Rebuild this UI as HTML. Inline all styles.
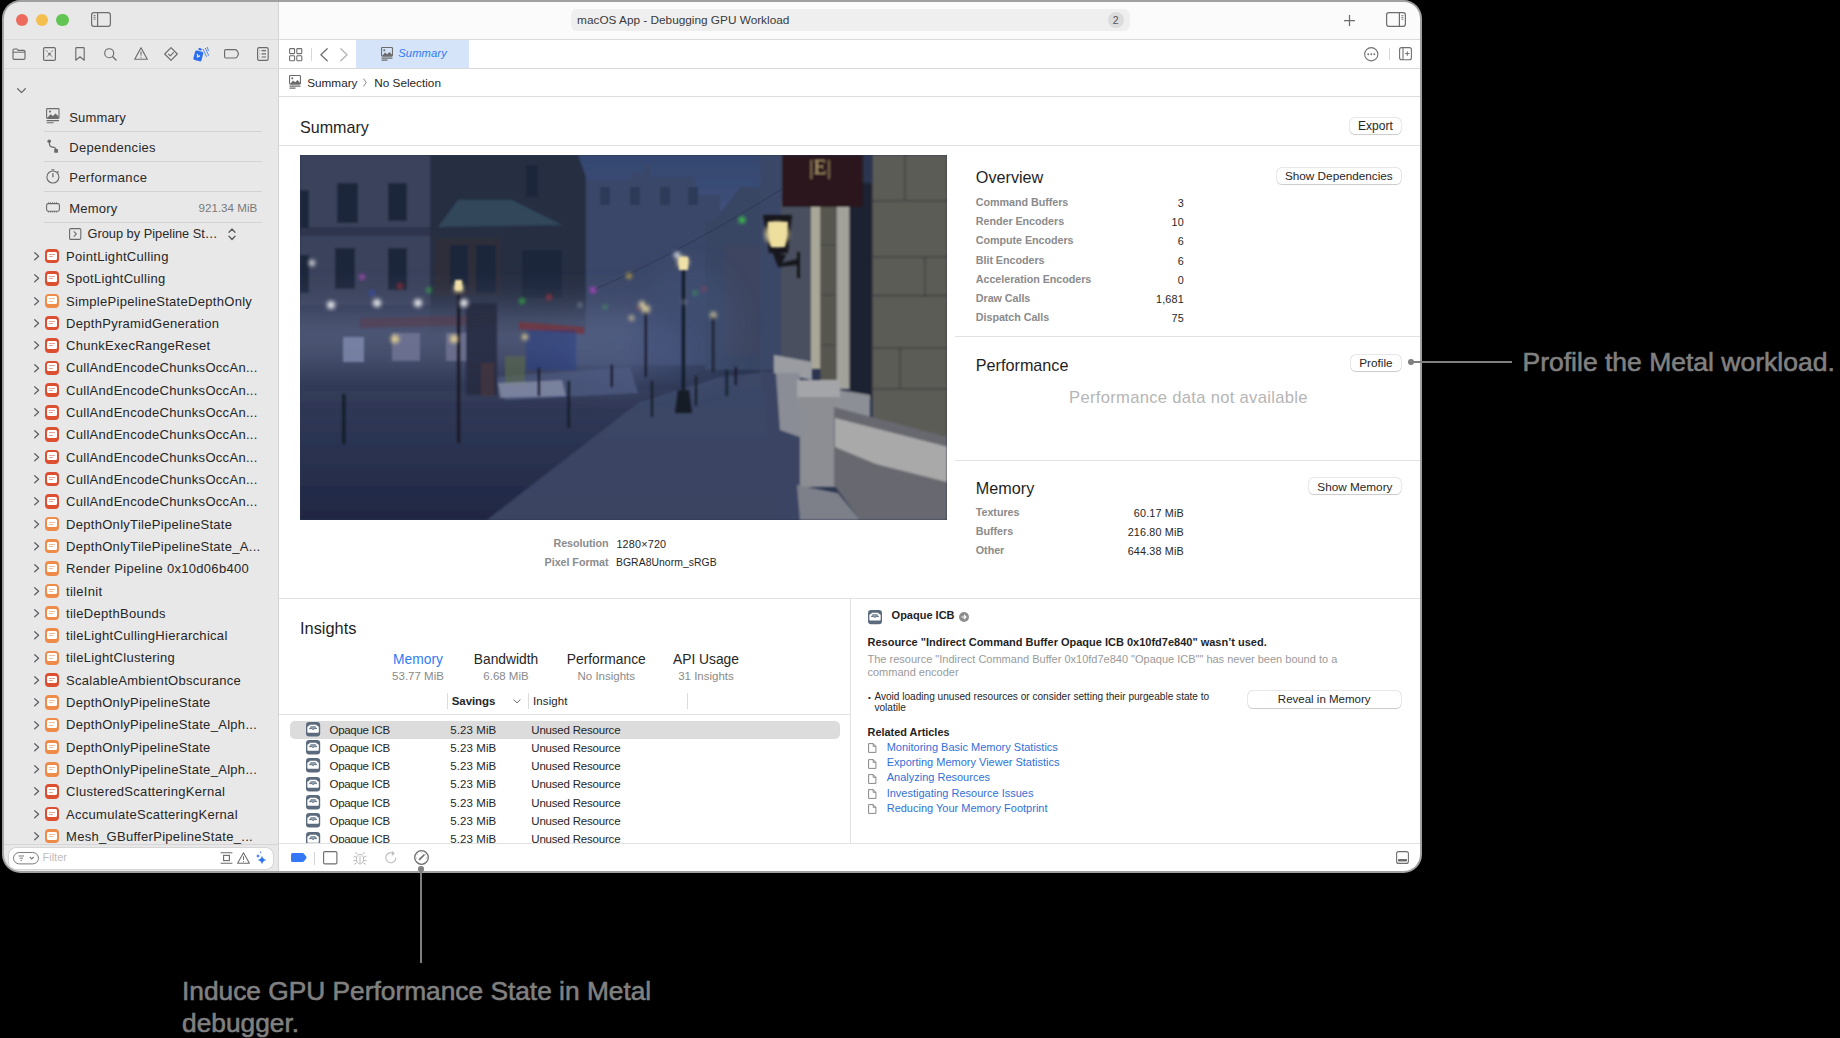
<!DOCTYPE html><html><head><meta charset="utf-8"><style>
*{box-sizing:border-box;margin:0;padding:0}
html,body{width:1840px;height:1038px;overflow:hidden;background:#000}
body{font-family:"Liberation Sans",sans-serif;color:#262626;position:relative}
.a{position:absolute;white-space:nowrap}
svg{position:absolute;overflow:visible}
#frame{position:absolute;left:1.7px;top:0;width:1420.5px;height:873.2px;border-radius:18.5px;background:#a0a0a0}
#content{position:absolute;left:0;top:0;width:1840px;height:1038px;clip-path:inset(2px 420px 167px 3.9px round 16.5px)}
.hl{position:absolute;height:1px;background:#dedede}
.vl{position:absolute;width:1px;background:#dedede}
.tt{position:absolute;font-size:13px;letter-spacing:.34px;color:#262626;white-space:nowrap;line-height:16px}
.ic{position:absolute;width:14.5px;height:14.5px;border-radius:4px}
.ic.red{background:#dc4f30}
.ic.org{background:#ee8b47}
.ic i{position:absolute;left:2.2px;top:2.7px;width:10.2px;height:8.2px;background:#fff;border-radius:1.5px}
.ic i b{position:absolute;height:1px}
.lbl{position:absolute;font-size:11px;font-weight:700;color:#8b8b8b;letter-spacing:-.15px;white-space:nowrap;line-height:13px}
.val{position:absolute;font-size:11px;color:#262626;white-space:nowrap;line-height:13px}
.btn{position:absolute;background:#fff;border-radius:4.5px;box-shadow:0 0 0 .5px rgba(0,0,0,.16),0 .7px 1px rgba(0,0,0,.14);font-size:11px;color:#262626;text-align:center;white-space:nowrap}
</style></head><body>
<div id="frame"></div><div id="content">
<div class="a" style="left:0;top:0;width:279px;height:873px;background:#e8e8e8"></div>
<div class="a" style="left:279px;top:0;width:1150px;height:39px;background:#fbfbfb"></div>
<div class="a" style="left:279px;top:39px;width:1150px;height:840px;background:#fff"></div>
<div class="vl" style="left:278.3px;top:0;height:873px;background:#d4d4d4"></div>
<div class="hl" style="left:0;top:38.6px;width:1430px;background:#dadada"></div>
<div class="hl" style="left:0;top:68px;width:1430px;background:#dadada"></div>
<div class="hl" style="left:279px;top:96px;width:1150px"></div>
<div class="a" style="left:15.9px;top:13.9px;width:12.2px;height:12.2px;border-radius:50%;background:#ed6a5e"></div>
<div class="a" style="left:35.9px;top:13.9px;width:12.2px;height:12.2px;border-radius:50%;background:#f5bf4f"></div>
<div class="a" style="left:56.4px;top:13.9px;width:12.2px;height:12.2px;border-radius:50%;background:#61c554"></div>
<svg style="left:91px;top:12px" width="20" height="15" viewBox="0 0 20 15"><rect x=".6" y=".6" width="18.8" height="13.8" rx="2.3" fill="none" stroke="#6e6e6e" stroke-width="1.2"/><line x1="6.6" y1=".6" x2="6.6" y2="14.4" stroke="#6e6e6e" stroke-width="1.2"/><line x1="2.6" y1="3.6" x2="4.6" y2="3.6" stroke="#6e6e6e" stroke-width=".9"/><line x1="2.6" y1="5.4" x2="4.6" y2="5.4" stroke="#6e6e6e" stroke-width=".9"/><line x1="2.6" y1="7.2" x2="4.6" y2="7.2" stroke="#6e6e6e" stroke-width=".9"/></svg>
<svg style="left:12px;top:48px" width="14" height="12" viewBox="0 0 14 12"><path d="M1,3 V10.2 Q1,11.4 2.2,11.4 H11.8 Q13,11.4 13,10.2 V3.6 Q13,2.4 11.8,2.4 H6.2 L5,1 H2.2 Q1,1 1,2.2 Z" fill="none" stroke="#6b6b6b" stroke-width="1.15" stroke-linejoin="round" stroke-linecap="round"/><line x1="1" y1="4.2" x2="13" y2="4.2" stroke="#6b6b6b" stroke-width="1"/></svg>
<svg style="left:43px;top:47px" width="13" height="14" viewBox="0 0 13 14"><rect x=".6" y=".6" width="11.8" height="12.8" rx="1.2" fill="none" stroke="#6b6b6b" stroke-width="1.15" stroke-linejoin="round" stroke-linecap="round"/><path d="M3.2,3.4 L9.8,10.6 M9.8,3.4 L3.2,10.6" stroke="#6b6b6b" stroke-width="1" stroke-dasharray="2 1.2"/><circle cx="6.5" cy="7" r="1.2" fill="#6b6b6b"/></svg>
<svg style="left:75px;top:47px" width="10" height="14" viewBox="0 0 10 14"><path d="M.8,13.2 V1.4 Q.8,.6 1.6,.6 H8.4 Q9.2,.6 9.2,1.4 V13.2 L5,9.8 Z" fill="none" stroke="#6b6b6b" stroke-width="1.15" stroke-linejoin="round" stroke-linecap="round"/></svg>
<svg style="left:104px;top:48px" width="13" height="13" viewBox="0 0 13 13"><circle cx="5.2" cy="5.2" r="4.5" fill="none" stroke="#6b6b6b" stroke-width="1.15" stroke-linejoin="round" stroke-linecap="round"/><line x1="8.5" y1="8.5" x2="12" y2="12" stroke="#6b6b6b" stroke-width="1.4" stroke-linecap="round"/></svg>
<svg style="left:134px;top:47px" width="14" height="13" viewBox="0 0 14 13"><path d="M7,.8 L13.3,12.2 H.7 Z" fill="none" stroke="#6b6b6b" stroke-width="1.15" stroke-linejoin="round" stroke-linecap="round"/><line x1="7" y1="4.5" x2="7" y2="8.6" stroke="#6b6b6b" stroke-width="1.1"/><circle cx="7" cy="10.3" r=".6" fill="#6b6b6b"/></svg>
<svg style="left:164px;top:47px" width="14" height="14" viewBox="0 0 14 14"><path d="M7,.7 L13.3,7 L7,13.3 L.7,7 Z" fill="none" stroke="#6b6b6b" stroke-width="1.15" stroke-linejoin="round" stroke-linecap="round"/><path d="M4.6,7.2 L6.3,8.8 L9.4,5.6" fill="none" stroke="#6b6b6b" stroke-width="1.15" stroke-linejoin="round" stroke-linecap="round"/></svg>
<svg style="left:194px;top:47px" width="16" height="14" viewBox="0 0 16 14"><g transform="rotate(15 4.3 8.9)"><rect x=".1" y="4" width="8.4" height="9.8" rx="1.6" fill="#2b6ff0"/><path d="M2.6,7.4 L4.6,9.6 M6,8.4 L3.2,10.6" stroke="#fff" stroke-width="1.1"/></g><rect x="4.4" y="1.2" width="3.4" height="2" rx=".8" fill="#2b6ff0" transform="rotate(15 6.1 2.2)"/><path d="M9.1,2.5 L12.4,9.3 M11.4,1.4 L14.5,8.2 M13.4,.6 L14.5,4.1" stroke="#2b6ff0" stroke-width="1" stroke-dasharray=".9 1.3" stroke-linecap="round" fill="none"/></svg>
<svg style="left:224px;top:49px" width="15" height="10" viewBox="0 0 15 10"><path d="M1.8,.6 H11 Q12.2,.6 13,1.6 L14.3,4.2 Q14.6,4.8 14.3,5.4 L13,8 Q12.2,9 11,9 H1.8 Q.6,9 .6,7.8 V1.8 Q.6,.6 1.8,.6 Z" fill="none" stroke="#6b6b6b" stroke-width="1.15" stroke-linejoin="round" stroke-linecap="round"/></svg>
<svg style="left:256.5px;top:47px" width="12" height="14" viewBox="0 0 12 14"><rect x=".6" y=".6" width="10.6" height="12.8" rx="1.6" fill="none" stroke="#6b6b6b" stroke-width="1.15" stroke-linejoin="round" stroke-linecap="round"/><path d="M4.6,3.6 H9 M4.6,6.8 H9 M4.6,10 H9" stroke="#6b6b6b" stroke-width="1.2"/><path d="M2.6,3.6 H3 M2.6,6.8 H3 M2.6,10 H3" stroke="#6b6b6b" stroke-width="1"/></svg>
<svg style="left:17px;top:88px" width="9" height="6" viewBox="0 0 9 6"><polyline points=".7,.7 4.5,4.6 8.3,.7" fill="none" stroke="#6a6a6a" stroke-width="1.3" stroke-linecap="round" stroke-linejoin="round"/></svg>
<div class="a" style="left:44px;top:131.0px;width:218px;height:1px;background:#d2d2d2"></div>
<div class="a" style="left:44px;top:161.0px;width:218px;height:1px;background:#d2d2d2"></div>
<div class="a" style="left:44px;top:190.8px;width:218px;height:1px;background:#d2d2d2"></div>
<div class="a" style="left:44px;top:221.9px;width:218px;height:1px;background:#d2d2d2"></div>
<div class="a" style="left:69.20px;top:111.10px;font-size:13px;line-height:13px;color:#2a2a2a;letter-spacing:0.17px;">Summary</div>
<div class="a" style="left:69.20px;top:141.00px;font-size:13px;line-height:13px;color:#2a2a2a;letter-spacing:0.3px;">Dependencies</div>
<div class="a" style="left:69.20px;top:171.20px;font-size:13px;line-height:13px;color:#2a2a2a;letter-spacing:0.34px;">Performance</div>
<div class="a" style="left:69.20px;top:201.60px;font-size:13px;line-height:13px;color:#2a2a2a;letter-spacing:0.24px;">Memory</div>
<div class="a" style="left:-342.80px;width:600px;text-align:right;top:202.48px;font-size:11.6px;line-height:11.6px;color:#7a7a7a;">921.34 MiB</div>
<svg style="left:46px;top:108px" width="14" height="16" viewBox="0 0 14 16"><rect x=".6" y=".6" width="12.4" height="9.8" rx=".8" fill="none" stroke="#6b6b6b" stroke-width="1.1"/><path d="M1.2,10 L4.5,6.2 L7,8 L9.5,5.5 L12.6,8.5 V10 Z" fill="#6b6b6b"/><circle cx="4" cy="3.6" r="1.1" fill="#6b6b6b"/><path d="M.6,12.6 H13 M.6,14.8 H7.6" stroke="#6b6b6b" stroke-width="1.1"/></svg>
<svg style="left:46.5px;top:139px" width="12" height="14" viewBox="0 0 12 14"><circle cx="2.2" cy="2.2" r="1.8" fill="#6b6b6b"/><path d="M2.2,3 L2.6,6 Q3,7.5 4.6,7.8 L7,8.3 Q8.8,8.8 9,10.4" fill="none" stroke="#6b6b6b" stroke-width="1.2"/><rect x="7.2" y="10" width="3.8" height="3.8" rx=".6" fill="#6b6b6b"/></svg>
<svg style="left:46px;top:168.5px" width="14" height="15" viewBox="0 0 14 15"><circle cx="6.9" cy="8" r="6" fill="none" stroke="#6b6b6b" stroke-width="1.1"/><path d="M6.9,4.3 V8.3" stroke="#6b6b6b" stroke-width="1.3"/><path d="M5.4,.7 H8.4 M11.4,2.2 L12.6,3.4" stroke="#6b6b6b" stroke-width="1.1"/></svg>
<svg style="left:46px;top:202px" width="14" height="11" viewBox="0 0 14 11"><rect x=".6" y="1.6" width="12.8" height="7.6" rx="1.6" fill="none" stroke="#6b6b6b" stroke-width="1.1"/><path d="M2.5,.2 V1.6 M4.5,.2 V1.6 M6.5,.2 V1.6 M8.5,.2 V1.6 M10.5,.2 V1.6 M2.5,9.2 V10.6 M4.5,9.2 V10.6 M6.5,9.2 V10.6 M8.5,9.2 V10.6 M10.5,9.2 V10.6" stroke="#6b6b6b" stroke-width=".8"/></svg>
<svg style="left:69px;top:227.6px" width="12.5" height="12" viewBox="0 0 12.5 12"><rect x=".6" y=".6" width="11.2" height="10.8" rx="1.2" fill="none" stroke="#6b6b6b" stroke-width="1.1"/><polyline points="4.8,3.4 7.3,6 4.8,8.6" fill="none" stroke="#6b6b6b" stroke-width="1.1"/></svg>
<div class="a" style="left:87.50px;top:228.46px;font-size:12.8px;line-height:12.8px;color:#2a2a2a;">Group by Pipeline St…</div>
<svg style="left:228px;top:228px" width="8" height="12.5" viewBox="0 0 8 12.5"><polyline points="1,4.2 4,1 7,4.2" fill="none" stroke="#5a5a5a" stroke-width="1.3" stroke-linejoin="round" stroke-linecap="round"/><polyline points="1,8.3 4,11.5 7,8.3" fill="none" stroke="#5a5a5a" stroke-width="1.3" stroke-linejoin="round" stroke-linecap="round"/></svg>
<svg style="left:33.8px;top:252.0px" width="5.5" height="8.5" viewBox="0 0 5.5 8.5"><polyline points=".7,.7 4.6,4.25 .7,7.8" fill="none" stroke="#5f5f5f" stroke-width="1.25" stroke-linecap="round" stroke-linejoin="round"/></svg>
<div class="a" style="left:45px;top:249.00px;width:14.4px;height:14.4px;border-radius:4px;background:#dc4f30"><div class="a" style="left:2.3px;top:2.7px;width:9.8px;height:7.9px;background:#fff;border-radius:1.5px"><div class="a" style="left:1.6px;top:2.2px;width:6px;height:1px;background:#e9a394"></div><div class="a" style="left:1.6px;top:4.4px;width:4.5px;height:1px;background:#e9a394"></div></div></div>
<div class="a" style="left:66.00px;top:249.90px;font-size:13px;line-height:13px;color:#262626;letter-spacing:0.3px;">PointLightCulling</div>
<svg style="left:33.8px;top:274.31px" width="5.5" height="8.5" viewBox="0 0 5.5 8.5"><polyline points=".7,.7 4.6,4.25 .7,7.8" fill="none" stroke="#5f5f5f" stroke-width="1.25" stroke-linecap="round" stroke-linejoin="round"/></svg>
<div class="a" style="left:45px;top:271.31px;width:14.4px;height:14.4px;border-radius:4px;background:#dc4f30"><div class="a" style="left:2.3px;top:2.7px;width:9.8px;height:7.9px;background:#fff;border-radius:1.5px"><div class="a" style="left:1.6px;top:2.2px;width:6px;height:1px;background:#e9a394"></div><div class="a" style="left:1.6px;top:4.4px;width:4.5px;height:1px;background:#e9a394"></div></div></div>
<div class="a" style="left:66.00px;top:272.21px;font-size:13px;line-height:13px;color:#262626;letter-spacing:0.3px;">SpotLightCulling</div>
<svg style="left:33.8px;top:296.62px" width="5.5" height="8.5" viewBox="0 0 5.5 8.5"><polyline points=".7,.7 4.6,4.25 .7,7.8" fill="none" stroke="#5f5f5f" stroke-width="1.25" stroke-linecap="round" stroke-linejoin="round"/></svg>
<div class="a" style="left:45px;top:293.62px;width:14.4px;height:14.4px;border-radius:4px;background:#ee8b48"><div class="a" style="left:2.3px;top:2.7px;width:9.8px;height:7.9px;background:#fff;border-radius:1.5px"><div class="a" style="left:1.6px;top:2.2px;width:6px;height:1px;background:#f3bf99"></div><div class="a" style="left:1.6px;top:4.4px;width:4.5px;height:1px;background:#f3bf99"></div></div></div>
<div class="a" style="left:66.00px;top:294.52px;font-size:13px;line-height:13px;color:#262626;letter-spacing:0.3px;">SimplePipelineStateDepthOnly</div>
<svg style="left:33.8px;top:318.93px" width="5.5" height="8.5" viewBox="0 0 5.5 8.5"><polyline points=".7,.7 4.6,4.25 .7,7.8" fill="none" stroke="#5f5f5f" stroke-width="1.25" stroke-linecap="round" stroke-linejoin="round"/></svg>
<div class="a" style="left:45px;top:315.93px;width:14.4px;height:14.4px;border-radius:4px;background:#dc4f30"><div class="a" style="left:2.3px;top:2.7px;width:9.8px;height:7.9px;background:#fff;border-radius:1.5px"><div class="a" style="left:1.6px;top:2.2px;width:6px;height:1px;background:#e9a394"></div><div class="a" style="left:1.6px;top:4.4px;width:4.5px;height:1px;background:#e9a394"></div></div></div>
<div class="a" style="left:66.00px;top:316.83px;font-size:13px;line-height:13px;color:#262626;letter-spacing:0.3px;">DepthPyramidGeneration</div>
<svg style="left:33.8px;top:341.24px" width="5.5" height="8.5" viewBox="0 0 5.5 8.5"><polyline points=".7,.7 4.6,4.25 .7,7.8" fill="none" stroke="#5f5f5f" stroke-width="1.25" stroke-linecap="round" stroke-linejoin="round"/></svg>
<div class="a" style="left:45px;top:338.24px;width:14.4px;height:14.4px;border-radius:4px;background:#dc4f30"><div class="a" style="left:2.3px;top:2.7px;width:9.8px;height:7.9px;background:#fff;border-radius:1.5px"><div class="a" style="left:1.6px;top:2.2px;width:6px;height:1px;background:#e9a394"></div><div class="a" style="left:1.6px;top:4.4px;width:4.5px;height:1px;background:#e9a394"></div></div></div>
<div class="a" style="left:66.00px;top:339.14px;font-size:13px;line-height:13px;color:#262626;letter-spacing:0.3px;">ChunkExecRangeReset</div>
<svg style="left:33.8px;top:363.55px" width="5.5" height="8.5" viewBox="0 0 5.5 8.5"><polyline points=".7,.7 4.6,4.25 .7,7.8" fill="none" stroke="#5f5f5f" stroke-width="1.25" stroke-linecap="round" stroke-linejoin="round"/></svg>
<div class="a" style="left:45px;top:360.55px;width:14.4px;height:14.4px;border-radius:4px;background:#dc4f30"><div class="a" style="left:2.3px;top:2.7px;width:9.8px;height:7.9px;background:#fff;border-radius:1.5px"><div class="a" style="left:1.6px;top:2.2px;width:6px;height:1px;background:#e9a394"></div><div class="a" style="left:1.6px;top:4.4px;width:4.5px;height:1px;background:#e9a394"></div></div></div>
<div class="a" style="left:66.00px;top:361.45px;font-size:13px;line-height:13px;color:#262626;letter-spacing:0.3px;">CullAndEncodeChunksOccAn...</div>
<svg style="left:33.8px;top:385.85999999999996px" width="5.5" height="8.5" viewBox="0 0 5.5 8.5"><polyline points=".7,.7 4.6,4.25 .7,7.8" fill="none" stroke="#5f5f5f" stroke-width="1.25" stroke-linecap="round" stroke-linejoin="round"/></svg>
<div class="a" style="left:45px;top:382.86px;width:14.4px;height:14.4px;border-radius:4px;background:#dc4f30"><div class="a" style="left:2.3px;top:2.7px;width:9.8px;height:7.9px;background:#fff;border-radius:1.5px"><div class="a" style="left:1.6px;top:2.2px;width:6px;height:1px;background:#e9a394"></div><div class="a" style="left:1.6px;top:4.4px;width:4.5px;height:1px;background:#e9a394"></div></div></div>
<div class="a" style="left:66.00px;top:383.76px;font-size:13px;line-height:13px;color:#262626;letter-spacing:0.3px;">CullAndEncodeChunksOccAn...</div>
<svg style="left:33.8px;top:408.17px" width="5.5" height="8.5" viewBox="0 0 5.5 8.5"><polyline points=".7,.7 4.6,4.25 .7,7.8" fill="none" stroke="#5f5f5f" stroke-width="1.25" stroke-linecap="round" stroke-linejoin="round"/></svg>
<div class="a" style="left:45px;top:405.17px;width:14.4px;height:14.4px;border-radius:4px;background:#dc4f30"><div class="a" style="left:2.3px;top:2.7px;width:9.8px;height:7.9px;background:#fff;border-radius:1.5px"><div class="a" style="left:1.6px;top:2.2px;width:6px;height:1px;background:#e9a394"></div><div class="a" style="left:1.6px;top:4.4px;width:4.5px;height:1px;background:#e9a394"></div></div></div>
<div class="a" style="left:66.00px;top:406.07px;font-size:13px;line-height:13px;color:#262626;letter-spacing:0.3px;">CullAndEncodeChunksOccAn...</div>
<svg style="left:33.8px;top:430.47999999999996px" width="5.5" height="8.5" viewBox="0 0 5.5 8.5"><polyline points=".7,.7 4.6,4.25 .7,7.8" fill="none" stroke="#5f5f5f" stroke-width="1.25" stroke-linecap="round" stroke-linejoin="round"/></svg>
<div class="a" style="left:45px;top:427.48px;width:14.4px;height:14.4px;border-radius:4px;background:#dc4f30"><div class="a" style="left:2.3px;top:2.7px;width:9.8px;height:7.9px;background:#fff;border-radius:1.5px"><div class="a" style="left:1.6px;top:2.2px;width:6px;height:1px;background:#e9a394"></div><div class="a" style="left:1.6px;top:4.4px;width:4.5px;height:1px;background:#e9a394"></div></div></div>
<div class="a" style="left:66.00px;top:428.38px;font-size:13px;line-height:13px;color:#262626;letter-spacing:0.3px;">CullAndEncodeChunksOccAn...</div>
<svg style="left:33.8px;top:452.79px" width="5.5" height="8.5" viewBox="0 0 5.5 8.5"><polyline points=".7,.7 4.6,4.25 .7,7.8" fill="none" stroke="#5f5f5f" stroke-width="1.25" stroke-linecap="round" stroke-linejoin="round"/></svg>
<div class="a" style="left:45px;top:449.79px;width:14.4px;height:14.4px;border-radius:4px;background:#dc4f30"><div class="a" style="left:2.3px;top:2.7px;width:9.8px;height:7.9px;background:#fff;border-radius:1.5px"><div class="a" style="left:1.6px;top:2.2px;width:6px;height:1px;background:#e9a394"></div><div class="a" style="left:1.6px;top:4.4px;width:4.5px;height:1px;background:#e9a394"></div></div></div>
<div class="a" style="left:66.00px;top:450.69px;font-size:13px;line-height:13px;color:#262626;letter-spacing:0.3px;">CullAndEncodeChunksOccAn...</div>
<svg style="left:33.8px;top:475.09999999999997px" width="5.5" height="8.5" viewBox="0 0 5.5 8.5"><polyline points=".7,.7 4.6,4.25 .7,7.8" fill="none" stroke="#5f5f5f" stroke-width="1.25" stroke-linecap="round" stroke-linejoin="round"/></svg>
<div class="a" style="left:45px;top:472.10px;width:14.4px;height:14.4px;border-radius:4px;background:#dc4f30"><div class="a" style="left:2.3px;top:2.7px;width:9.8px;height:7.9px;background:#fff;border-radius:1.5px"><div class="a" style="left:1.6px;top:2.2px;width:6px;height:1px;background:#e9a394"></div><div class="a" style="left:1.6px;top:4.4px;width:4.5px;height:1px;background:#e9a394"></div></div></div>
<div class="a" style="left:66.00px;top:473.00px;font-size:13px;line-height:13px;color:#262626;letter-spacing:0.3px;">CullAndEncodeChunksOccAn...</div>
<svg style="left:33.8px;top:497.41px" width="5.5" height="8.5" viewBox="0 0 5.5 8.5"><polyline points=".7,.7 4.6,4.25 .7,7.8" fill="none" stroke="#5f5f5f" stroke-width="1.25" stroke-linecap="round" stroke-linejoin="round"/></svg>
<div class="a" style="left:45px;top:494.41px;width:14.4px;height:14.4px;border-radius:4px;background:#dc4f30"><div class="a" style="left:2.3px;top:2.7px;width:9.8px;height:7.9px;background:#fff;border-radius:1.5px"><div class="a" style="left:1.6px;top:2.2px;width:6px;height:1px;background:#e9a394"></div><div class="a" style="left:1.6px;top:4.4px;width:4.5px;height:1px;background:#e9a394"></div></div></div>
<div class="a" style="left:66.00px;top:495.31px;font-size:13px;line-height:13px;color:#262626;letter-spacing:0.3px;">CullAndEncodeChunksOccAn...</div>
<svg style="left:33.8px;top:519.7199999999999px" width="5.5" height="8.5" viewBox="0 0 5.5 8.5"><polyline points=".7,.7 4.6,4.25 .7,7.8" fill="none" stroke="#5f5f5f" stroke-width="1.25" stroke-linecap="round" stroke-linejoin="round"/></svg>
<div class="a" style="left:45px;top:516.72px;width:14.4px;height:14.4px;border-radius:4px;background:#ee8b48"><div class="a" style="left:2.3px;top:2.7px;width:9.8px;height:7.9px;background:#fff;border-radius:1.5px"><div class="a" style="left:1.6px;top:2.2px;width:6px;height:1px;background:#f3bf99"></div><div class="a" style="left:1.6px;top:4.4px;width:4.5px;height:1px;background:#f3bf99"></div></div></div>
<div class="a" style="left:66.00px;top:517.62px;font-size:13px;line-height:13px;color:#262626;letter-spacing:0.3px;">DepthOnlyTilePipelineState</div>
<svg style="left:33.8px;top:542.03px" width="5.5" height="8.5" viewBox="0 0 5.5 8.5"><polyline points=".7,.7 4.6,4.25 .7,7.8" fill="none" stroke="#5f5f5f" stroke-width="1.25" stroke-linecap="round" stroke-linejoin="round"/></svg>
<div class="a" style="left:45px;top:539.03px;width:14.4px;height:14.4px;border-radius:4px;background:#ee8b48"><div class="a" style="left:2.3px;top:2.7px;width:9.8px;height:7.9px;background:#fff;border-radius:1.5px"><div class="a" style="left:1.6px;top:2.2px;width:6px;height:1px;background:#f3bf99"></div><div class="a" style="left:1.6px;top:4.4px;width:4.5px;height:1px;background:#f3bf99"></div></div></div>
<div class="a" style="left:66.00px;top:539.93px;font-size:13px;line-height:13px;color:#262626;letter-spacing:0.3px;">DepthOnlyTilePipelineState_A...</div>
<svg style="left:33.8px;top:564.3399999999999px" width="5.5" height="8.5" viewBox="0 0 5.5 8.5"><polyline points=".7,.7 4.6,4.25 .7,7.8" fill="none" stroke="#5f5f5f" stroke-width="1.25" stroke-linecap="round" stroke-linejoin="round"/></svg>
<div class="a" style="left:45px;top:561.34px;width:14.4px;height:14.4px;border-radius:4px;background:#ee8b48"><div class="a" style="left:2.3px;top:2.7px;width:9.8px;height:7.9px;background:#fff;border-radius:1.5px"><div class="a" style="left:1.6px;top:2.2px;width:6px;height:1px;background:#f3bf99"></div><div class="a" style="left:1.6px;top:4.4px;width:4.5px;height:1px;background:#f3bf99"></div></div></div>
<div class="a" style="left:66.00px;top:562.24px;font-size:13px;line-height:13px;color:#262626;letter-spacing:0.3px;">Render Pipeline 0x10d06b400</div>
<svg style="left:33.8px;top:586.6499999999999px" width="5.5" height="8.5" viewBox="0 0 5.5 8.5"><polyline points=".7,.7 4.6,4.25 .7,7.8" fill="none" stroke="#5f5f5f" stroke-width="1.25" stroke-linecap="round" stroke-linejoin="round"/></svg>
<div class="a" style="left:45px;top:583.65px;width:14.4px;height:14.4px;border-radius:4px;background:#ee8b48"><div class="a" style="left:2.3px;top:2.7px;width:9.8px;height:7.9px;background:#fff;border-radius:1.5px"><div class="a" style="left:1.6px;top:2.2px;width:6px;height:1px;background:#f3bf99"></div><div class="a" style="left:1.6px;top:4.4px;width:4.5px;height:1px;background:#f3bf99"></div></div></div>
<div class="a" style="left:66.00px;top:584.55px;font-size:13px;line-height:13px;color:#262626;letter-spacing:0.3px;">tileInit</div>
<svg style="left:33.8px;top:608.9599999999999px" width="5.5" height="8.5" viewBox="0 0 5.5 8.5"><polyline points=".7,.7 4.6,4.25 .7,7.8" fill="none" stroke="#5f5f5f" stroke-width="1.25" stroke-linecap="round" stroke-linejoin="round"/></svg>
<div class="a" style="left:45px;top:605.96px;width:14.4px;height:14.4px;border-radius:4px;background:#ee8b48"><div class="a" style="left:2.3px;top:2.7px;width:9.8px;height:7.9px;background:#fff;border-radius:1.5px"><div class="a" style="left:1.6px;top:2.2px;width:6px;height:1px;background:#f3bf99"></div><div class="a" style="left:1.6px;top:4.4px;width:4.5px;height:1px;background:#f3bf99"></div></div></div>
<div class="a" style="left:66.00px;top:606.86px;font-size:13px;line-height:13px;color:#262626;letter-spacing:0.3px;">tileDepthBounds</div>
<svg style="left:33.8px;top:631.27px" width="5.5" height="8.5" viewBox="0 0 5.5 8.5"><polyline points=".7,.7 4.6,4.25 .7,7.8" fill="none" stroke="#5f5f5f" stroke-width="1.25" stroke-linecap="round" stroke-linejoin="round"/></svg>
<div class="a" style="left:45px;top:628.27px;width:14.4px;height:14.4px;border-radius:4px;background:#ee8b48"><div class="a" style="left:2.3px;top:2.7px;width:9.8px;height:7.9px;background:#fff;border-radius:1.5px"><div class="a" style="left:1.6px;top:2.2px;width:6px;height:1px;background:#f3bf99"></div><div class="a" style="left:1.6px;top:4.4px;width:4.5px;height:1px;background:#f3bf99"></div></div></div>
<div class="a" style="left:66.00px;top:629.17px;font-size:13px;line-height:13px;color:#262626;letter-spacing:0.3px;">tileLightCullingHierarchical</div>
<svg style="left:33.8px;top:653.5799999999999px" width="5.5" height="8.5" viewBox="0 0 5.5 8.5"><polyline points=".7,.7 4.6,4.25 .7,7.8" fill="none" stroke="#5f5f5f" stroke-width="1.25" stroke-linecap="round" stroke-linejoin="round"/></svg>
<div class="a" style="left:45px;top:650.58px;width:14.4px;height:14.4px;border-radius:4px;background:#ee8b48"><div class="a" style="left:2.3px;top:2.7px;width:9.8px;height:7.9px;background:#fff;border-radius:1.5px"><div class="a" style="left:1.6px;top:2.2px;width:6px;height:1px;background:#f3bf99"></div><div class="a" style="left:1.6px;top:4.4px;width:4.5px;height:1px;background:#f3bf99"></div></div></div>
<div class="a" style="left:66.00px;top:651.48px;font-size:13px;line-height:13px;color:#262626;letter-spacing:0.3px;">tileLightClustering</div>
<svg style="left:33.8px;top:675.8899999999999px" width="5.5" height="8.5" viewBox="0 0 5.5 8.5"><polyline points=".7,.7 4.6,4.25 .7,7.8" fill="none" stroke="#5f5f5f" stroke-width="1.25" stroke-linecap="round" stroke-linejoin="round"/></svg>
<div class="a" style="left:45px;top:672.89px;width:14.4px;height:14.4px;border-radius:4px;background:#dc4f30"><div class="a" style="left:2.3px;top:2.7px;width:9.8px;height:7.9px;background:#fff;border-radius:1.5px"><div class="a" style="left:1.6px;top:2.2px;width:6px;height:1px;background:#e9a394"></div><div class="a" style="left:1.6px;top:4.4px;width:4.5px;height:1px;background:#e9a394"></div></div></div>
<div class="a" style="left:66.00px;top:673.79px;font-size:13px;line-height:13px;color:#262626;letter-spacing:0.3px;">ScalableAmbientObscurance</div>
<svg style="left:33.8px;top:698.1999999999999px" width="5.5" height="8.5" viewBox="0 0 5.5 8.5"><polyline points=".7,.7 4.6,4.25 .7,7.8" fill="none" stroke="#5f5f5f" stroke-width="1.25" stroke-linecap="round" stroke-linejoin="round"/></svg>
<div class="a" style="left:45px;top:695.20px;width:14.4px;height:14.4px;border-radius:4px;background:#ee8b48"><div class="a" style="left:2.3px;top:2.7px;width:9.8px;height:7.9px;background:#fff;border-radius:1.5px"><div class="a" style="left:1.6px;top:2.2px;width:6px;height:1px;background:#f3bf99"></div><div class="a" style="left:1.6px;top:4.4px;width:4.5px;height:1px;background:#f3bf99"></div></div></div>
<div class="a" style="left:66.00px;top:696.10px;font-size:13px;line-height:13px;color:#262626;letter-spacing:0.3px;">DepthOnlyPipelineState</div>
<svg style="left:33.8px;top:720.51px" width="5.5" height="8.5" viewBox="0 0 5.5 8.5"><polyline points=".7,.7 4.6,4.25 .7,7.8" fill="none" stroke="#5f5f5f" stroke-width="1.25" stroke-linecap="round" stroke-linejoin="round"/></svg>
<div class="a" style="left:45px;top:717.51px;width:14.4px;height:14.4px;border-radius:4px;background:#ee8b48"><div class="a" style="left:2.3px;top:2.7px;width:9.8px;height:7.9px;background:#fff;border-radius:1.5px"><div class="a" style="left:1.6px;top:2.2px;width:6px;height:1px;background:#f3bf99"></div><div class="a" style="left:1.6px;top:4.4px;width:4.5px;height:1px;background:#f3bf99"></div></div></div>
<div class="a" style="left:66.00px;top:718.41px;font-size:13px;line-height:13px;color:#262626;letter-spacing:0.3px;">DepthOnlyPipelineState_Alph...</div>
<svg style="left:33.8px;top:742.8199999999999px" width="5.5" height="8.5" viewBox="0 0 5.5 8.5"><polyline points=".7,.7 4.6,4.25 .7,7.8" fill="none" stroke="#5f5f5f" stroke-width="1.25" stroke-linecap="round" stroke-linejoin="round"/></svg>
<div class="a" style="left:45px;top:739.82px;width:14.4px;height:14.4px;border-radius:4px;background:#ee8b48"><div class="a" style="left:2.3px;top:2.7px;width:9.8px;height:7.9px;background:#fff;border-radius:1.5px"><div class="a" style="left:1.6px;top:2.2px;width:6px;height:1px;background:#f3bf99"></div><div class="a" style="left:1.6px;top:4.4px;width:4.5px;height:1px;background:#f3bf99"></div></div></div>
<div class="a" style="left:66.00px;top:740.72px;font-size:13px;line-height:13px;color:#262626;letter-spacing:0.3px;">DepthOnlyPipelineState</div>
<svg style="left:33.8px;top:765.1299999999999px" width="5.5" height="8.5" viewBox="0 0 5.5 8.5"><polyline points=".7,.7 4.6,4.25 .7,7.8" fill="none" stroke="#5f5f5f" stroke-width="1.25" stroke-linecap="round" stroke-linejoin="round"/></svg>
<div class="a" style="left:45px;top:762.13px;width:14.4px;height:14.4px;border-radius:4px;background:#ee8b48"><div class="a" style="left:2.3px;top:2.7px;width:9.8px;height:7.9px;background:#fff;border-radius:1.5px"><div class="a" style="left:1.6px;top:2.2px;width:6px;height:1px;background:#f3bf99"></div><div class="a" style="left:1.6px;top:4.4px;width:4.5px;height:1px;background:#f3bf99"></div></div></div>
<div class="a" style="left:66.00px;top:763.03px;font-size:13px;line-height:13px;color:#262626;letter-spacing:0.3px;">DepthOnlyPipelineState_Alph...</div>
<svg style="left:33.8px;top:787.4399999999998px" width="5.5" height="8.5" viewBox="0 0 5.5 8.5"><polyline points=".7,.7 4.6,4.25 .7,7.8" fill="none" stroke="#5f5f5f" stroke-width="1.25" stroke-linecap="round" stroke-linejoin="round"/></svg>
<div class="a" style="left:45px;top:784.44px;width:14.4px;height:14.4px;border-radius:4px;background:#dc4f30"><div class="a" style="left:2.3px;top:2.7px;width:9.8px;height:7.9px;background:#fff;border-radius:1.5px"><div class="a" style="left:1.6px;top:2.2px;width:6px;height:1px;background:#e9a394"></div><div class="a" style="left:1.6px;top:4.4px;width:4.5px;height:1px;background:#e9a394"></div></div></div>
<div class="a" style="left:66.00px;top:785.34px;font-size:13px;line-height:13px;color:#262626;letter-spacing:0.3px;">ClusteredScatteringKernal</div>
<svg style="left:33.8px;top:809.75px" width="5.5" height="8.5" viewBox="0 0 5.5 8.5"><polyline points=".7,.7 4.6,4.25 .7,7.8" fill="none" stroke="#5f5f5f" stroke-width="1.25" stroke-linecap="round" stroke-linejoin="round"/></svg>
<div class="a" style="left:45px;top:806.75px;width:14.4px;height:14.4px;border-radius:4px;background:#dc4f30"><div class="a" style="left:2.3px;top:2.7px;width:9.8px;height:7.9px;background:#fff;border-radius:1.5px"><div class="a" style="left:1.6px;top:2.2px;width:6px;height:1px;background:#e9a394"></div><div class="a" style="left:1.6px;top:4.4px;width:4.5px;height:1px;background:#e9a394"></div></div></div>
<div class="a" style="left:66.00px;top:807.65px;font-size:13px;line-height:13px;color:#262626;letter-spacing:0.3px;">AccumulateScatteringKernal</div>
<svg style="left:33.8px;top:832.06px" width="5.5" height="8.5" viewBox="0 0 5.5 8.5"><polyline points=".7,.7 4.6,4.25 .7,7.8" fill="none" stroke="#5f5f5f" stroke-width="1.25" stroke-linecap="round" stroke-linejoin="round"/></svg>
<div class="a" style="left:45px;top:829.06px;width:14.4px;height:14.4px;border-radius:4px;background:#ee8b48"><div class="a" style="left:2.3px;top:2.7px;width:9.8px;height:7.9px;background:#fff;border-radius:1.5px"><div class="a" style="left:1.6px;top:2.2px;width:6px;height:1px;background:#f3bf99"></div><div class="a" style="left:1.6px;top:4.4px;width:4.5px;height:1px;background:#f3bf99"></div></div></div>
<div class="a" style="left:66.00px;top:829.96px;font-size:13px;line-height:13px;color:#262626;letter-spacing:0.3px;">Mesh_GBufferPipelineState_...</div>
<div class="a" style="left:0px;top:844px;width:279px;height:1px;background:#d6d6d6"></div>
<div class="a" style="left:8.7px;top:847.6px;width:264px;height:21.3px;border-radius:7px;background:#fff;box-shadow:0 0 0 .8px #d0d0d0"></div>
<svg style="left:12.6px;top:852.3px" width="26" height="12.4" viewBox="0 0 26 12.4"><rect x=".5" y=".5" width="25" height="11.4" rx="5.7" fill="none" stroke="#7a7a7a" stroke-width="1"/><path d="M5.6,4 H11 M6.6,6.2 H10 M7.6,8.4 H9" stroke="#7a7a7a" stroke-width="1"/><polyline points="16.8,5 18.8,7 20.8,5" fill="none" stroke="#7a7a7a" stroke-width="1.1"/></svg>
<div class="a" style="left:42.50px;top:852.49px;font-size:11px;line-height:11px;color:#bdbdbd;">Filter</div>
<svg style="left:220px;top:852px" width="13" height="12" viewBox="0 0 13 12"><path d="M.6,.8 H12.4 M.6,11.2 H12.4" stroke="#6b6b6b" stroke-width="1.1"/><rect x="3.6" y="3.4" width="5.8" height="5.2" fill="none" stroke="#6b6b6b" stroke-width="1.1"/></svg>
<svg style="left:237px;top:851.5px" width="13" height="12" viewBox="0 0 13 12"><path d="M6.5,.7 L12.4,11.3 H.6 Z" fill="none" stroke="#6b6b6b" stroke-width="1.05" stroke-linejoin="round"/><line x1="6.5" y1="4.3" x2="6.5" y2="8" stroke="#6b6b6b" stroke-width="1"/><circle cx="6.5" cy="9.6" r=".55" fill="#6b6b6b"/></svg>
<svg style="left:254.5px;top:851px" width="12" height="14" viewBox="0 0 12 14"><path d="M7,4.5 Q7.6,8.3 11.5,9 Q7.6,9.7 7,13.5 Q6.4,9.7 2.5,9 Q6.4,8.3 7,4.5 Z" fill="#2f74f2"/><path d="M3,3 Q3.3,4.6 4.8,5 Q3.3,5.4 3,7 Q2.7,5.4 1.2,5 Q2.7,4.6 3,3 Z" fill="#2f74f2"/><circle cx="5.6" cy="1.2" r=".7" fill="#2f74f2"/></svg>
<div class="a" style="left:571px;top:9.1px;width:559px;height:21.7px;border-radius:6px;background:#efefef"></div>
<div class="a" style="left:577.10px;top:15.01px;font-size:11.8px;line-height:11.8px;color:#3a3a3a;">macOS App - Debugging GPU Workload</div>
<div class="a" style="left:1107.7px;top:12px;width:16px;height:16px;border-radius:50%;background:#dcdcdc"></div>
<div class="a" style="left:715.70px;width:800px;text-align:center;top:15.11px;font-size:10.5px;line-height:10.5px;color:#555;">2</div>
<svg style="left:1344px;top:14.5px" width="11" height="11" viewBox="0 0 11 11"><path d="M5.5,0 V11 M0,5.5 H11" stroke="#6e6e6e" stroke-width="1.25"/></svg>
<svg style="left:1386px;top:12px" width="20" height="15" viewBox="0 0 20 15"><rect x=".6" y=".6" width="18.8" height="13.8" rx="2.3" fill="none" stroke="#6e6e6e" stroke-width="1.2"/><line x1="13.4" y1=".6" x2="13.4" y2="14.4" stroke="#6e6e6e" stroke-width="1.2"/><line x1="15.4" y1="3.6" x2="17.4" y2="3.6" stroke="#6e6e6e" stroke-width=".9"/><line x1="15.4" y1="5.4" x2="17.4" y2="5.4" stroke="#6e6e6e" stroke-width=".9"/><line x1="15.4" y1="7.2" x2="17.4" y2="7.2" stroke="#6e6e6e" stroke-width=".9"/></svg>
<svg style="left:288.5px;top:47.6px" width="13.5" height="13.5" viewBox="0 0 13.5 13.5"><g fill="none" stroke="#6e6e6e" stroke-width="1.1"><rect x=".6" y=".6" width="5" height="5" rx=".8"/><rect x="7.8" y=".6" width="5" height="5" rx=".8"/><rect x=".6" y="7.8" width="5" height="5" rx=".8"/><rect x="7.8" y="7.8" width="5" height="5" rx=".8"/></g></svg>
<div class="a" style="left:311.2px;top:48px;width:1px;height:12.5px;background:#d8d8d8"></div>
<svg style="left:320px;top:47.6px" width="8" height="13.5" viewBox="0 0 8 13.5"><polyline points="7.2,.7 .9,6.75 7.2,12.8" fill="none" stroke="#6e6e6e" stroke-width="1.25" stroke-linecap="round" stroke-linejoin="round"/></svg>
<svg style="left:340.3px;top:47.6px" width="8" height="13.5" viewBox="0 0 8 13.5"><polyline points=".8,.7 7.1,6.75 .8,12.8" fill="none" stroke="#b3b3b3" stroke-width="1.25" stroke-linecap="round" stroke-linejoin="round"/></svg>
<div class="a" style="left:356.4px;top:39.5px;width:112.6px;height:28.5px;background:#d5e4f8"></div>
<svg style="left:381px;top:47px" width="12" height="14" viewBox="0 0 12 14"><rect x=".55" y=".55" width="10.9" height="8.6" rx=".8" fill="none" stroke="#6b6b6b" stroke-width="1.1"/><path d="M1.1,8.9 L4,5.6 L6.2,7.2 L8.4,5 L10.9,7.5 V8.9 Z" fill="#6b6b6b"/><path d="M3.3,2.2 V4.4 M2.2,3.3 H4.4" stroke="#6b6b6b" stroke-width=".9"/><path d="M.55,11.1 H11.45 M.55,13.1 H6.5" stroke="#6b6b6b" stroke-width="1.1"/></svg>
<div class="a" style="left:398.30px;top:48.02px;font-size:11.2px;line-height:11.2px;color:#2f7bf5;letter-spacing:0.1px;font-style:italic;">Summary</div>
<svg style="left:1363.5px;top:46.8px" width="14.5" height="14.5" viewBox="0 0 14.5 14.5"><circle cx="7.25" cy="7.25" r="6.6" fill="none" stroke="#6e6e6e" stroke-width="1.1"/><circle cx="4.2" cy="7.25" r=".9" fill="#6e6e6e"/><circle cx="7.25" cy="7.25" r=".9" fill="#6e6e6e"/><circle cx="10.3" cy="7.25" r=".9" fill="#6e6e6e"/></svg>
<div class="a" style="left:1389.3px;top:48px;width:1px;height:12px;background:#d8d8d8"></div>
<svg style="left:1399px;top:47.4px" width="13" height="13.3" viewBox="0 0 13 13.3"><rect x=".6" y=".6" width="11.8" height="12.1" rx="2" fill="none" stroke="#6e6e6e" stroke-width="1.1"/><line x1="4" y1=".6" x2="4" y2="12.7" stroke="#6e6e6e" stroke-width="1.1"/><path d="M8.3,4.4 V8.8 M6.1,6.6 H10.5" stroke="#6e6e6e" stroke-width="1"/></svg>
<svg style="left:288.7px;top:75px" width="12" height="14" viewBox="0 0 12 14"><rect x=".55" y=".55" width="10.9" height="8.6" rx=".8" fill="none" stroke="#6b6b6b" stroke-width="1.1"/><path d="M1.1,8.9 L4,5.6 L6.2,7.2 L8.4,5 L10.9,7.5 V8.9 Z" fill="#6b6b6b"/><path d="M3.3,2.2 V4.4 M2.2,3.3 H4.4" stroke="#6b6b6b" stroke-width=".9"/><path d="M.55,11.1 H11.45 M.55,13.1 H6.5" stroke="#6b6b6b" stroke-width="1.1"/></svg>
<div class="a" style="left:307.20px;top:76.55px;font-size:11.75px;line-height:11.75px;color:#262626;">Summary</div>
<svg style="left:362.6px;top:78px" width="4" height="9" viewBox="0 0 4 9"><polyline points=".6,.6 3.2,4.5 .6,8.4" fill="none" stroke="#8a8a8a" stroke-width="1"/></svg>
<div class="a" style="left:374.30px;top:76.55px;font-size:11.75px;line-height:11.75px;color:#262626;">No Selection</div>
<div class="a" style="left:300.00px;top:119.07px;font-size:16.1px;line-height:16.1px;color:#1f1f1f;">Summary</div>
<div class="btn" style="left:1349.6px;top:117.6px;width:51.600000000000136px;height:16.400000000000006px"></div><div class="a" style="left:975.40px;width:800px;text-align:center;top:119.96px;font-size:12px;line-height:12px;color:#262626;">Export</div>
<div class="a" style="left:279px;top:145.2px;width:1141px;height:1px;background:#e2e2e2"></div>
<svg style="left:300px;top:155px;overflow:hidden" width="647" height="365" viewBox="0 0 647 365"><defs><filter id="bl1" x="-5%" y="-5%" width="110%" height="110%"><feGaussianBlur stdDeviation="1"/></filter><filter id="bl8" x="-50%" y="-50%" width="200%" height="200%"><feGaussianBlur stdDeviation="12"/></filter><filter id="glow" x="-300%" y="-300%" width="700%" height="700%"><feGaussianBlur stdDeviation="2"/></filter><linearGradient id="sky" x1="0" y1="0" x2="0" y2="1"><stop offset="0" stop-color="#34466f"/><stop offset="1" stop-color="#475a84"/></linearGradient><linearGradient id="gnd" x1="0" y1="0" x2="0" y2="1"><stop offset="0" stop-color="#323b58"/><stop offset=".5" stop-color="#2a3250"/><stop offset="1" stop-color="#1f2742"/></linearGradient><linearGradient id="cob" x1="0" y1="0" x2="0" y2="1"><stop offset="0" stop-color="#3c4767"/><stop offset="1" stop-color="#3a4462"/></linearGradient><linearGradient id="fog" x1="0" y1="0" x2="0" y2="1"><stop offset="0" stop-color="#4a5372" stop-opacity="0"/><stop offset=".4" stop-color="#5a6482" stop-opacity=".8"/><stop offset=".75" stop-color="#4a5473" stop-opacity=".65"/><stop offset="1" stop-color="#2c3552" stop-opacity="0"/></linearGradient></defs><rect width="647" height="365" fill="#2c3550"/><g filter="url(#bl1)"><rect x="265" y="0" width="220" height="110" fill="url(#sky)"/><path d="M285,25 H330 L332,18 H345 V10 H350 V22 H395 V40 H420 V70 H410 V210 H270 V25 Z" fill="#3a4767"/><path d="M300,32 h10 v18 h-10 Z M330,32 h10 v18 h-10 Z M360,32 h10 v18 h-10 Z M388,32 h10 v18 h-10 Z" fill="#2f3a58"/><path d="M405,68 L415,65 L440,32 H482 V215 H405 Z" fill="#384564"/><path d="M425,90 H470 V200 H425 Z" fill="#3c4460"/><rect x="0" y="0" width="131" height="150" fill="#3a425b"/><rect x="0" y="72" width="131" height="9" fill="#2f364d"/><path d="M130,0 H278 L286,22 V178 H130 Z" fill="#262d42"/><path d="M138,72 L158,45 H212 L262,70 Z" fill="#32475a"/><rect x="134" y="83" width="66" height="58" fill="#2e2f3a"/><rect x="37" y="28" width="21" height="40" fill="#1f263a"/><rect x="88" y="28" width="19" height="38" fill="#1f263a"/><rect x="35" y="93" width="20" height="41" fill="#1f263a"/><rect x="88" y="93" width="19" height="42" fill="#1f263a"/><rect x="0" y="35" width="9" height="38" fill="#1f263a"/><rect x="0" y="100" width="9" height="38" fill="#1f263a"/><rect x="150" y="90" width="18" height="45" fill="#1f263a"/><rect x="176" y="90" width="20" height="48" fill="#1f263a"/><rect x="226" y="10" width="12" height="32" fill="#1f263a"/><rect x="222" y="95" width="40" height="48" fill="#1f263a"/><rect x="460" y="0" width="25" height="215" fill="#3b4766"/><rect x="481" y="46" width="31" height="170" fill="#4a4f5e"/><rect x="511" y="49" width="9.5" height="165" fill="#a9a798"/><rect x="520.5" y="46" width="16" height="185" fill="#57574f"/><rect x="536.6" y="42" width="13" height="192" fill="#a3a29a"/><rect x="549.6" y="28" width="23" height="216" fill="#1e2030"/><rect x="572.5" y="0" width="74.5" height="306" fill="#5b5b57"/><path d="M572.5,45.7 H647 M572.5,102 H647 M572.5,140.6 H647 M572.5,193 H647 M572.5,233.7 H647 M572.5,291.7 H647 M605,0 V45 M625,102 V140 M600,193 V233" stroke="#424240" stroke-width="1.6"/><path d="M520.5,90 H536 M520.5,140 H536 M520.5,190 H536" stroke="#47473f" stroke-width="1.2"/><rect x="482" y="0" width="80.6" height="52" fill="#2a141a"/><text x="520" y="19" font-family="Liberation Serif" font-size="22" fill="#a89468" text-anchor="middle">|E|</text><path d="M0,235 H460 V365 H0 Z" fill="url(#gnd)"/><path d="M338,248 L420,222 L482,215 L505,365 H187 Z" fill="url(#cob)"/><path d="M460,215 L500,225 L512,365 H480 Z" fill="#3b4564"/><path d="M195,222 L330,212 L338,238 L205,245 Z" fill="#49547a"/><path d="M474,200 L512,207 V225 L474,218 Z" fill="#9a9ca2"/><path d="M476,218 H500 V282 L480,275 Z" fill="#8a8d95"/><path d="M497,228 L570,240 V262 L497,250 Z" fill="#8d8f96"/><path d="M500,238 H536 V332 H500 Z" fill="#8c8e93"/><path d="M497,225 H540 V242 H497 Z" fill="#a4a5a8"/><path d="M534,252 L647,282 V365 H560 L534,330 Z" fill="#676970"/><path d="M535,263 L647,291.7 V327 L576,309 L535,292 Z" fill="#aaa9a9"/><path d="M497,330 L538,338 L560,365 H500 Z" fill="#7d8089"/></g><g filter="url(#bl8)"><rect x="-30" y="130" width="370" height="110" fill="url(#fog)"/><ellipse cx="320" cy="195" rx="70" ry="35" fill="#4f5d88" opacity=".5"/><ellipse cx="390" cy="170" rx="50" ry="60" fill="#4a5a85" opacity=".3"/></g><g filter="url(#bl1)"><rect x="43" y="182" width="21" height="25" fill="#7e87ab" opacity=".85"/><rect x="92" y="178" width="28" height="28" fill="#7a7c9c" opacity=".7"/><rect x="146" y="178" width="20" height="28" fill="#7c7c9c" opacity=".65"/><path d="M60,163 L197,160 L197,170 L60,173 Z" fill="#5a3c4c" opacity=".55"/><path d="M219,167 L284,172 L284,179 L219,174 Z" fill="#7a3038" opacity=".75"/><rect x="226" y="175" width="50" height="40" fill="#203a8a" opacity=".45"/><rect x="166" y="148" width="31" height="92" fill="#242a3f" opacity=".85"/><rect x="181" y="208" width="13" height="33" fill="#4a3440" opacity=".7"/><rect x="205" y="201" width="20" height="29" fill="#5a6a48" opacity=".6"/><path d="M198,228 L262,225 L266,241 L200,243 Z" fill="#8a92aa" opacity=".75"/></g><g filter="url(#bl1)"><rect x="157.1" y="128" width="3" height="160" fill="#161a27"/><rect x="381.8" y="110" width="3.2" height="148" fill="#161a27"/><rect x="344.8" y="148" width="2" height="74" fill="#161a27"/><rect x="412.4" y="160" width="1.8" height="57" fill="#161a27"/><rect x="42.3" y="239" width="3" height="50" fill="#161a27"/><rect x="267.7" y="226" width="2.2" height="47" fill="#161a27"/><rect x="237.9" y="213" width="2" height="28" fill="#161a27"/><rect x="310.8" y="210" width="2" height="22" fill="#161a27"/><rect x="351.0" y="226" width="2" height="36" fill="#161a27"/><rect x="395.0" y="221" width="2" height="30" fill="#161a27"/><rect x="425.7" y="215" width="2" height="26" fill="#161a27"/><rect x="434.8" y="212" width="2" height="18" fill="#161a27"/><path d="M378,235 H389 L392,258 H375 Z" fill="#161a27"/><path d="M463,60 L492,60 L488,98 L469,98 Z M472,96 L486,100 L482,108 L497,104 L497,97 L500,97 L500,123 L497,123 L497,110 L478,112 Z" fill="#17171d"/></g><path d="M293,135 Q380,98 482,34" stroke="#20263a" stroke-width=".7" fill="none" opacity=".6"/><g filter="url(#glow)" opacity=".85"><circle cx="477" cy="79" r="12" fill="#f5e6a8"/><circle cx="383" cy="107" r="6" fill="#f3e4a8"/><circle cx="158.6" cy="133" r="5" fill="#f3e4a8"/><circle cx="345.8" cy="154" r="4" fill="#f3e4a8"/><circle cx="413.3" cy="160" r="3" fill="#f3e4a8"/><circle cx="12" cy="108" r="3" fill="#ffffff"/><circle cx="31" cy="150" r="4" fill="#ffffff"/><circle cx="77" cy="148" r="4" fill="#ffffff"/><circle cx="118" cy="148" r="4" fill="#ffffff"/><circle cx="164" cy="148" r="4" fill="#ffffff"/><circle cx="342" cy="149" r="3" fill="#f3e4a8"/><circle cx="331.5" cy="163" r="2.5" fill="#f3e4a8"/><circle cx="95" cy="184" r="4" fill="#f5e090"/><circle cx="154" cy="184" r="4" fill="#f5e090"/><circle cx="225" cy="182" r="3" fill="#f5e090"/><circle cx="62" cy="122" r="2.2" fill="#ff50ff"/><circle cx="100" cy="131" r="2.2" fill="#ff3030"/><circle cx="129" cy="135" r="2" fill="#30ff30"/><circle cx="222" cy="146" r="2.2" fill="#30ff30"/><circle cx="249" cy="142" r="2.2" fill="#ff3030"/><circle cx="293" cy="135" r="2.5" fill="#ff40ff"/><circle cx="442" cy="65" r="3" fill="#40ff40"/><circle cx="377" cy="100" r="3" fill="#ffffff"/><circle cx="329" cy="121" r="2.4" fill="#ffd030"/><circle cx="72" cy="138" r="2" fill="#3050ff"/><circle cx="395" cy="138" r="1.6" fill="#40ff40"/><circle cx="404" cy="134" r="1.6" fill="#ff4040"/><circle cx="384" cy="147" r="1.5" fill="#ffffff"/><circle cx="339" cy="153" r="1.4" fill="#ff4040"/><circle cx="305" cy="152" r="1.4" fill="#40ff40"/><circle cx="280" cy="150" r="1.4" fill="#ffffff"/></g><g filter="url(#bl1)"><path d="M467.7,66.8 H488 L485,92 H471 Z" fill="#efdf9f"/><rect x="379" y="102" width="9" height="13" fill="#efe0a6"/><rect x="155" y="125" width="7" height="10" fill="#efe0a6"/></g></svg>
<div class="a" style="left:975.80px;top:169.39px;font-size:16.2px;line-height:16.2px;color:#1f1f1f;">Overview</div>
<div class="btn" style="left:1276.5px;top:167.9px;width:124.70000000000005px;height:16.5px"></div><div class="a" style="left:938.85px;width:800px;text-align:center;top:170.43px;font-size:11.75px;line-height:11.75px;color:#262626;">Show Dependencies</div>
<div class="a" style="left:975.80px;top:196.70px;font-size:10.75px;line-height:10.75px;color:#8b8b8b;font-weight:700;letter-spacing:-0.05px;">Command Buffers</div>
<div class="a" style="left:583.80px;width:600px;text-align:right;top:197.66px;font-size:10.8px;line-height:10.8px;color:#262626;letter-spacing:0.15px;">3</div>
<div class="a" style="left:975.80px;top:215.98px;font-size:10.75px;line-height:10.75px;color:#8b8b8b;font-weight:700;letter-spacing:-0.05px;">Render Encoders</div>
<div class="a" style="left:583.80px;width:600px;text-align:right;top:216.94px;font-size:10.8px;line-height:10.8px;color:#262626;letter-spacing:0.15px;">10</div>
<div class="a" style="left:975.80px;top:235.26px;font-size:10.75px;line-height:10.75px;color:#8b8b8b;font-weight:700;letter-spacing:-0.05px;">Compute Encoders</div>
<div class="a" style="left:583.80px;width:600px;text-align:right;top:236.22px;font-size:10.8px;line-height:10.8px;color:#262626;letter-spacing:0.15px;">6</div>
<div class="a" style="left:975.80px;top:254.54px;font-size:10.75px;line-height:10.75px;color:#8b8b8b;font-weight:700;letter-spacing:-0.05px;">Blit Encoders</div>
<div class="a" style="left:583.80px;width:600px;text-align:right;top:255.50px;font-size:10.8px;line-height:10.8px;color:#262626;letter-spacing:0.15px;">6</div>
<div class="a" style="left:975.80px;top:273.82px;font-size:10.75px;line-height:10.75px;color:#8b8b8b;font-weight:700;letter-spacing:-0.05px;">Acceleration Encoders</div>
<div class="a" style="left:583.80px;width:600px;text-align:right;top:274.78px;font-size:10.8px;line-height:10.8px;color:#262626;letter-spacing:0.15px;">0</div>
<div class="a" style="left:975.80px;top:293.10px;font-size:10.75px;line-height:10.75px;color:#8b8b8b;font-weight:700;letter-spacing:-0.05px;">Draw Calls</div>
<div class="a" style="left:583.80px;width:600px;text-align:right;top:294.06px;font-size:10.8px;line-height:10.8px;color:#262626;letter-spacing:0.15px;">1,681</div>
<div class="a" style="left:975.80px;top:312.38px;font-size:10.75px;line-height:10.75px;color:#8b8b8b;font-weight:700;letter-spacing:-0.05px;">Dispatch Calls</div>
<div class="a" style="left:583.80px;width:600px;text-align:right;top:313.34px;font-size:10.8px;line-height:10.8px;color:#262626;letter-spacing:0.15px;">75</div>
<div class="a" style="left:955px;top:335.8px;width:465px;height:1px;background:#e2e2e2"></div>
<div class="a" style="left:975.80px;top:356.59px;font-size:16.2px;line-height:16.2px;color:#1f1f1f;">Performance</div>
<div class="btn" style="left:1350.6px;top:354.7px;width:50.700000000000045px;height:16.30000000000001px"></div><div class="a" style="left:975.95px;width:800px;text-align:center;top:357.13px;font-size:11.75px;line-height:11.75px;color:#262626;">Profile</div>
<div class="a" style="left:788.40px;width:800px;text-align:center;top:389.95px;font-size:16.6px;line-height:16.6px;color:#b5b5b5;letter-spacing:0.3px;">Performance data not available</div>
<div class="a" style="left:955px;top:459.8px;width:465px;height:1px;background:#e2e2e2"></div>
<div class="a" style="left:975.80px;top:480.29px;font-size:16.2px;line-height:16.2px;color:#1f1f1f;">Memory</div>
<div class="btn" style="left:1308.5px;top:478.3px;width:92.79999999999995px;height:16.099999999999966px"></div><div class="a" style="left:954.90px;width:800px;text-align:center;top:480.63px;font-size:11.75px;line-height:11.75px;color:#262626;">Show Memory</div>
<div class="a" style="left:975.80px;top:506.90px;font-size:10.75px;line-height:10.75px;color:#8b8b8b;font-weight:700;letter-spacing:-0.05px;">Textures</div>
<div class="a" style="left:583.80px;width:600px;text-align:right;top:507.86px;font-size:10.8px;line-height:10.8px;color:#262626;letter-spacing:0.15px;">60.17 MiB</div>
<div class="a" style="left:975.80px;top:526.15px;font-size:10.75px;line-height:10.75px;color:#8b8b8b;font-weight:700;letter-spacing:-0.05px;">Buffers</div>
<div class="a" style="left:583.80px;width:600px;text-align:right;top:527.11px;font-size:10.8px;line-height:10.8px;color:#262626;letter-spacing:0.15px;">216.80 MiB</div>
<div class="a" style="left:975.80px;top:545.40px;font-size:10.75px;line-height:10.75px;color:#8b8b8b;font-weight:700;letter-spacing:-0.05px;">Other</div>
<div class="a" style="left:583.80px;width:600px;text-align:right;top:546.36px;font-size:10.8px;line-height:10.8px;color:#262626;letter-spacing:0.15px;">644.38 MiB</div>
<div class="a" style="left:8.50px;width:600px;text-align:right;top:537.70px;font-size:10.75px;line-height:10.75px;color:#8b8b8b;font-weight:700;letter-spacing:-0.05px;">Resolution</div>
<div class="a" style="left:616.40px;top:538.66px;font-size:10.8px;line-height:10.8px;color:#262626;letter-spacing:0.2px;">1280×720</div>
<div class="a" style="left:8.50px;width:600px;text-align:right;top:556.90px;font-size:10.75px;line-height:10.75px;color:#8b8b8b;font-weight:700;letter-spacing:-0.05px;">Pixel Format</div>
<div class="a" style="left:616.00px;top:557.50px;font-size:10.4px;line-height:10.4px;color:#262626;letter-spacing:0.05px;">BGRA8Unorm_sRGB</div>
<div class="a" style="left:279px;top:598px;width:1141px;height:1px;background:#e2e2e2"></div>
<div class="a" style="left:850.3px;top:598px;width:1px;height:245.5px;background:#e2e2e2"></div>
<div class="a" style="left:300.00px;top:620.22px;font-size:16.4px;line-height:16.4px;color:#1f1f1f;">Insights</div>
<div class="a" style="left:18.00px;width:800px;text-align:center;top:652.72px;font-size:13.8px;line-height:13.8px;color:#2f7bf5;">Memory</div>
<div class="a" style="left:18.00px;width:800px;text-align:center;top:671.07px;font-size:11.5px;line-height:11.5px;color:#8a8a8a;">53.77 MiB</div>
<div class="a" style="left:106.00px;width:800px;text-align:center;top:652.72px;font-size:13.8px;line-height:13.8px;color:#262626;">Bandwidth</div>
<div class="a" style="left:106.00px;width:800px;text-align:center;top:671.07px;font-size:11.5px;line-height:11.5px;color:#8a8a8a;">6.68 MiB</div>
<div class="a" style="left:206.30px;width:800px;text-align:center;top:652.72px;font-size:13.8px;line-height:13.8px;color:#262626;">Performance</div>
<div class="a" style="left:206.30px;width:800px;text-align:center;top:671.07px;font-size:11.5px;line-height:11.5px;color:#8a8a8a;">No Insights</div>
<div class="a" style="left:306.00px;width:800px;text-align:center;top:652.72px;font-size:13.8px;line-height:13.8px;color:#262626;">API Usage</div>
<div class="a" style="left:306.00px;width:800px;text-align:center;top:671.07px;font-size:11.5px;line-height:11.5px;color:#8a8a8a;">31 Insights</div>
<div class="a" style="left:447.4px;top:693px;width:1px;height:15.5px;background:#dcdcdc"></div>
<div class="a" style="left:528.4px;top:693px;width:1px;height:15.5px;background:#dcdcdc"></div>
<div class="a" style="left:686.7px;top:693px;width:1px;height:15.5px;background:#dcdcdc"></div>
<div class="a" style="left:451.80px;top:695.57px;font-size:11.5px;line-height:11.5px;color:#262626;font-weight:700;letter-spacing:-0.1px;">Savings</div>
<svg style="left:513px;top:698.5px" width="8" height="5" viewBox="0 0 8 5"><polyline points=".6,.6 4,3.9 7.4,.6" fill="none" stroke="#6b6b6b" stroke-width="1"/></svg>
<div class="a" style="left:533.00px;top:695.57px;font-size:11.5px;line-height:11.5px;color:#262626;letter-spacing:0.1px;">Insight</div>
<div class="a" style="left:279px;top:714.3px;width:571px;height:1px;background:#e2e2e2"></div>
<div class="a" style="left:289.5px;top:720.5px;width:550.7px;height:18.3px;border-radius:5px;background:#dcdcdc"></div>
<div class="a" style="left:0;top:715px;width:850px;height:128.3px;overflow:hidden"><div class="a" style="left:0;top:-715px;width:850px;height:900px">
<svg style="left:305.8px;top:721.9px" width="14.2" height="14.484" viewBox="0 0 14.2 14.484"><g transform="scale(0.979)"><rect x="0" y="0" width="14.5" height="14.8" rx="3.3" fill="#5b6b7d"/><path d="M1.4,5.4 Q1.4,4.6 2.4,4.4 L4.3,2.9 H10.2 L12.1,4.4 Q13.1,4.6 13.1,5.4 V10.2 Q13.1,11 12.3,11 H2.2 Q1.4,11 1.4,10.2 Z" fill="#fff"/><path d="M3.2,6.8 L4.8,4.2 H9.7 L11.3,6.8 H8.4 L7.25,8 L6.1,6.8 Z" fill="#8f9caa"/><path d="M3.2,6.8 H6.1 L7.25,8 L8.4,6.8 H11.3" fill="none" stroke="#5b6b7d" stroke-width=".9"/></g></svg>
<div class="a" style="left:329.50px;top:724.57px;font-size:11.5px;line-height:11.5px;color:#262626;letter-spacing:-0.3px;">Opaque ICB</div>
<div class="a" style="left:450.20px;top:724.57px;font-size:11.5px;line-height:11.5px;color:#262626;letter-spacing:0.1px;">5.23 MiB</div>
<div class="a" style="left:531.30px;top:724.57px;font-size:11.5px;line-height:11.5px;color:#262626;letter-spacing:-0.2px;">Unused Resource</div>
<svg style="left:305.8px;top:740.18px" width="14.2" height="14.484" viewBox="0 0 14.2 14.484"><g transform="scale(0.979)"><rect x="0" y="0" width="14.5" height="14.8" rx="3.3" fill="#5b6b7d"/><path d="M1.4,5.4 Q1.4,4.6 2.4,4.4 L4.3,2.9 H10.2 L12.1,4.4 Q13.1,4.6 13.1,5.4 V10.2 Q13.1,11 12.3,11 H2.2 Q1.4,11 1.4,10.2 Z" fill="#fff"/><path d="M3.2,6.8 L4.8,4.2 H9.7 L11.3,6.8 H8.4 L7.25,8 L6.1,6.8 Z" fill="#8f9caa"/><path d="M3.2,6.8 H6.1 L7.25,8 L8.4,6.8 H11.3" fill="none" stroke="#5b6b7d" stroke-width=".9"/></g></svg>
<div class="a" style="left:329.50px;top:742.85px;font-size:11.5px;line-height:11.5px;color:#262626;letter-spacing:-0.3px;">Opaque ICB</div>
<div class="a" style="left:450.20px;top:742.85px;font-size:11.5px;line-height:11.5px;color:#262626;letter-spacing:0.1px;">5.23 MiB</div>
<div class="a" style="left:531.30px;top:742.85px;font-size:11.5px;line-height:11.5px;color:#262626;letter-spacing:-0.2px;">Unused Resource</div>
<svg style="left:305.8px;top:758.46px" width="14.2" height="14.484" viewBox="0 0 14.2 14.484"><g transform="scale(0.979)"><rect x="0" y="0" width="14.5" height="14.8" rx="3.3" fill="#5b6b7d"/><path d="M1.4,5.4 Q1.4,4.6 2.4,4.4 L4.3,2.9 H10.2 L12.1,4.4 Q13.1,4.6 13.1,5.4 V10.2 Q13.1,11 12.3,11 H2.2 Q1.4,11 1.4,10.2 Z" fill="#fff"/><path d="M3.2,6.8 L4.8,4.2 H9.7 L11.3,6.8 H8.4 L7.25,8 L6.1,6.8 Z" fill="#8f9caa"/><path d="M3.2,6.8 H6.1 L7.25,8 L8.4,6.8 H11.3" fill="none" stroke="#5b6b7d" stroke-width=".9"/></g></svg>
<div class="a" style="left:329.50px;top:761.13px;font-size:11.5px;line-height:11.5px;color:#262626;letter-spacing:-0.3px;">Opaque ICB</div>
<div class="a" style="left:450.20px;top:761.13px;font-size:11.5px;line-height:11.5px;color:#262626;letter-spacing:0.1px;">5.23 MiB</div>
<div class="a" style="left:531.30px;top:761.13px;font-size:11.5px;line-height:11.5px;color:#262626;letter-spacing:-0.2px;">Unused Resource</div>
<svg style="left:305.8px;top:776.74px" width="14.2" height="14.484" viewBox="0 0 14.2 14.484"><g transform="scale(0.979)"><rect x="0" y="0" width="14.5" height="14.8" rx="3.3" fill="#5b6b7d"/><path d="M1.4,5.4 Q1.4,4.6 2.4,4.4 L4.3,2.9 H10.2 L12.1,4.4 Q13.1,4.6 13.1,5.4 V10.2 Q13.1,11 12.3,11 H2.2 Q1.4,11 1.4,10.2 Z" fill="#fff"/><path d="M3.2,6.8 L4.8,4.2 H9.7 L11.3,6.8 H8.4 L7.25,8 L6.1,6.8 Z" fill="#8f9caa"/><path d="M3.2,6.8 H6.1 L7.25,8 L8.4,6.8 H11.3" fill="none" stroke="#5b6b7d" stroke-width=".9"/></g></svg>
<div class="a" style="left:329.50px;top:779.41px;font-size:11.5px;line-height:11.5px;color:#262626;letter-spacing:-0.3px;">Opaque ICB</div>
<div class="a" style="left:450.20px;top:779.41px;font-size:11.5px;line-height:11.5px;color:#262626;letter-spacing:0.1px;">5.23 MiB</div>
<div class="a" style="left:531.30px;top:779.41px;font-size:11.5px;line-height:11.5px;color:#262626;letter-spacing:-0.2px;">Unused Resource</div>
<svg style="left:305.8px;top:795.02px" width="14.2" height="14.484" viewBox="0 0 14.2 14.484"><g transform="scale(0.979)"><rect x="0" y="0" width="14.5" height="14.8" rx="3.3" fill="#5b6b7d"/><path d="M1.4,5.4 Q1.4,4.6 2.4,4.4 L4.3,2.9 H10.2 L12.1,4.4 Q13.1,4.6 13.1,5.4 V10.2 Q13.1,11 12.3,11 H2.2 Q1.4,11 1.4,10.2 Z" fill="#fff"/><path d="M3.2,6.8 L4.8,4.2 H9.7 L11.3,6.8 H8.4 L7.25,8 L6.1,6.8 Z" fill="#8f9caa"/><path d="M3.2,6.8 H6.1 L7.25,8 L8.4,6.8 H11.3" fill="none" stroke="#5b6b7d" stroke-width=".9"/></g></svg>
<div class="a" style="left:329.50px;top:797.69px;font-size:11.5px;line-height:11.5px;color:#262626;letter-spacing:-0.3px;">Opaque ICB</div>
<div class="a" style="left:450.20px;top:797.69px;font-size:11.5px;line-height:11.5px;color:#262626;letter-spacing:0.1px;">5.23 MiB</div>
<div class="a" style="left:531.30px;top:797.69px;font-size:11.5px;line-height:11.5px;color:#262626;letter-spacing:-0.2px;">Unused Resource</div>
<svg style="left:305.8px;top:813.3px" width="14.2" height="14.484" viewBox="0 0 14.2 14.484"><g transform="scale(0.979)"><rect x="0" y="0" width="14.5" height="14.8" rx="3.3" fill="#5b6b7d"/><path d="M1.4,5.4 Q1.4,4.6 2.4,4.4 L4.3,2.9 H10.2 L12.1,4.4 Q13.1,4.6 13.1,5.4 V10.2 Q13.1,11 12.3,11 H2.2 Q1.4,11 1.4,10.2 Z" fill="#fff"/><path d="M3.2,6.8 L4.8,4.2 H9.7 L11.3,6.8 H8.4 L7.25,8 L6.1,6.8 Z" fill="#8f9caa"/><path d="M3.2,6.8 H6.1 L7.25,8 L8.4,6.8 H11.3" fill="none" stroke="#5b6b7d" stroke-width=".9"/></g></svg>
<div class="a" style="left:329.50px;top:815.97px;font-size:11.5px;line-height:11.5px;color:#262626;letter-spacing:-0.3px;">Opaque ICB</div>
<div class="a" style="left:450.20px;top:815.97px;font-size:11.5px;line-height:11.5px;color:#262626;letter-spacing:0.1px;">5.23 MiB</div>
<div class="a" style="left:531.30px;top:815.97px;font-size:11.5px;line-height:11.5px;color:#262626;letter-spacing:-0.2px;">Unused Resource</div>
<svg style="left:305.8px;top:831.58px" width="14.2" height="14.484" viewBox="0 0 14.2 14.484"><g transform="scale(0.979)"><rect x="0" y="0" width="14.5" height="14.8" rx="3.3" fill="#5b6b7d"/><path d="M1.4,5.4 Q1.4,4.6 2.4,4.4 L4.3,2.9 H10.2 L12.1,4.4 Q13.1,4.6 13.1,5.4 V10.2 Q13.1,11 12.3,11 H2.2 Q1.4,11 1.4,10.2 Z" fill="#fff"/><path d="M3.2,6.8 L4.8,4.2 H9.7 L11.3,6.8 H8.4 L7.25,8 L6.1,6.8 Z" fill="#8f9caa"/><path d="M3.2,6.8 H6.1 L7.25,8 L8.4,6.8 H11.3" fill="none" stroke="#5b6b7d" stroke-width=".9"/></g></svg>
<div class="a" style="left:329.50px;top:834.25px;font-size:11.5px;line-height:11.5px;color:#262626;letter-spacing:-0.3px;">Opaque ICB</div>
<div class="a" style="left:450.20px;top:834.25px;font-size:11.5px;line-height:11.5px;color:#262626;letter-spacing:0.1px;">5.23 MiB</div>
<div class="a" style="left:531.30px;top:834.25px;font-size:11.5px;line-height:11.5px;color:#262626;letter-spacing:-0.2px;">Unused Resource</div>
</div></div>
<div class="a" style="left:279px;top:843.3px;width:1141px;height:1px;background:#e2e2e2"></div>
<svg style="left:867.8px;top:610px" width="14" height="14.280000000000001" viewBox="0 0 14 14.280000000000001"><g transform="scale(0.966)"><rect x="0" y="0" width="14.5" height="14.8" rx="3.3" fill="#5b6b7d"/><path d="M1.4,5.4 Q1.4,4.6 2.4,4.4 L4.3,2.9 H10.2 L12.1,4.4 Q13.1,4.6 13.1,5.4 V10.2 Q13.1,11 12.3,11 H2.2 Q1.4,11 1.4,10.2 Z" fill="#fff"/><path d="M3.2,6.8 L4.8,4.2 H9.7 L11.3,6.8 H8.4 L7.25,8 L6.1,6.8 Z" fill="#8f9caa"/><path d="M3.2,6.8 H6.1 L7.25,8 L8.4,6.8 H11.3" fill="none" stroke="#5b6b7d" stroke-width=".9"/></g></svg>
<div class="a" style="left:891.60px;top:610.19px;font-size:11px;line-height:11px;color:#1f1f1f;font-weight:700;">Opaque ICB</div>
<svg style="left:959px;top:611.6px" width="10" height="10" viewBox="0 0 10 10"><circle cx="5" cy="5" r="5" fill="#8e8e8e"/><path d="M2.6,5 H7 M5,3 L7,5 L5,7" fill="none" stroke="#fff" stroke-width="1.1"/></svg>
<div class="a" style="left:867.50px;top:636.69px;font-size:11px;line-height:11px;color:#1f1f1f;font-weight:700;">Resource &quot;Indirect Command Buffer Opaque ICB 0x10fd7e840&quot; wasn’t used.</div>
<div class="a" style="left:867.50px;top:653.89px;font-size:11px;line-height:11px;color:#9a9a9a;">The resource &quot;Indirect Command Buffer 0x10fd7e840 &quot;Opaque ICB&quot;&quot; has never been bound to a</div>
<div class="a" style="left:867.50px;top:666.99px;font-size:11px;line-height:11px;color:#9a9a9a;">command encoder</div>
<div class="a" style="left:868.00px;top:693.93px;font-size:8px;line-height:8px;color:#262626;">•</div>
<div class="a" style="left:874.40px;top:692.15px;font-size:10.1px;line-height:10.1px;color:#262626;">Avoid loading unused resources or consider setting their purgeable state to</div>
<div class="a" style="left:874.40px;top:703.15px;font-size:10.1px;line-height:10.1px;color:#262626;">volatile</div>
<div class="btn" style="left:1247.8px;top:690.6px;width:152.79999999999995px;height:17.199999999999932px"></div><div class="a" style="left:924.20px;width:800px;text-align:center;top:693.61px;font-size:11.5px;line-height:11.5px;color:#262626;">Reveal in Memory</div>
<div class="a" style="left:867.60px;top:726.77px;font-size:10.9px;line-height:10.9px;color:#1f1f1f;font-weight:700;">Related Articles</div>
<svg style="left:868px;top:743.4000000000001px" width="8.5" height="10" viewBox="0 0 8.5 10"><path d="M.6,.6 H5.2 L7.9,3.3 V9.4 H.6 Z M5.2,.6 V3.3 H7.9" fill="none" stroke="#7a7a7a" stroke-width=".9" stroke-linejoin="round"/></svg>
<div class="a" style="left:886.70px;top:741.89px;font-size:11px;line-height:11px;color:#3170d8;">Monitoring Basic Memory Statistics</div>
<svg style="left:868px;top:758.6500000000001px" width="8.5" height="10" viewBox="0 0 8.5 10"><path d="M.6,.6 H5.2 L7.9,3.3 V9.4 H.6 Z M5.2,.6 V3.3 H7.9" fill="none" stroke="#7a7a7a" stroke-width=".9" stroke-linejoin="round"/></svg>
<div class="a" style="left:886.70px;top:757.14px;font-size:11px;line-height:11px;color:#3170d8;">Exporting Memory Viewer Statistics</div>
<svg style="left:868px;top:773.9000000000001px" width="8.5" height="10" viewBox="0 0 8.5 10"><path d="M.6,.6 H5.2 L7.9,3.3 V9.4 H.6 Z M5.2,.6 V3.3 H7.9" fill="none" stroke="#7a7a7a" stroke-width=".9" stroke-linejoin="round"/></svg>
<div class="a" style="left:886.70px;top:772.39px;font-size:11px;line-height:11px;color:#3170d8;">Analyzing Resources</div>
<svg style="left:868px;top:789.1500000000001px" width="8.5" height="10" viewBox="0 0 8.5 10"><path d="M.6,.6 H5.2 L7.9,3.3 V9.4 H.6 Z M5.2,.6 V3.3 H7.9" fill="none" stroke="#7a7a7a" stroke-width=".9" stroke-linejoin="round"/></svg>
<div class="a" style="left:886.70px;top:787.64px;font-size:11px;line-height:11px;color:#3170d8;">Investigating Resource Issues</div>
<svg style="left:868px;top:804.4000000000001px" width="8.5" height="10" viewBox="0 0 8.5 10"><path d="M.6,.6 H5.2 L7.9,3.3 V9.4 H.6 Z M5.2,.6 V3.3 H7.9" fill="none" stroke="#7a7a7a" stroke-width=".9" stroke-linejoin="round"/></svg>
<div class="a" style="left:886.70px;top:802.89px;font-size:11px;line-height:11px;color:#3170d8;">Reducing Your Memory Footprint</div>
<svg style="left:291px;top:853px" width="15.5" height="9" viewBox="0 0 15.5 9"><path d="M1.5,0 H11.5 Q12.5,0 13.2,.9 L15.2,3.6 Q15.6,4.5 15.2,5.4 L13.2,8.1 Q12.5,9 11.5,9 H1.5 Q0,9 0,7.5 V1.5 Q0,0 1.5,0 Z" fill="#3478f6"/></svg>
<div class="a" style="left:314.2px;top:852px;width:1px;height:12.5px;background:#d5d5d5"></div>
<svg style="left:323px;top:851px" width="14.5" height="13.5" viewBox="0 0 14.5 13.5"><rect x=".6" y=".6" width="13.3" height="12.3" rx="1.2" fill="none" stroke="#6e6e6e" stroke-width="1.15"/></svg>
<svg style="left:353px;top:850.5px" width="14" height="14" viewBox="0 0 14 14"><g fill="none" stroke="#b9b9b9" stroke-width="1"><ellipse cx="7" cy="8.2" rx="3.6" ry="4.8"/><path d="M4.4,3.4 L2.6,1 M9.6,3.4 L11.4,1 M3.4,6.4 L.6,5.2 M10.6,6.4 L13.4,5.2 M3.2,9.6 L.4,9.6 M10.8,9.6 L13.6,9.6 M3.6,11.8 L1.2,13.4 M10.4,11.8 L12.8,13.4 M7,5.2 V12"/></g></svg>
<svg style="left:384.5px;top:851px" width="12" height="13" viewBox="0 0 12 13"><path d="M10.8,6.8 A5,5 0 1 1 8.2,2.4" fill="none" stroke="#b9b9b9" stroke-width="1.1"/><polyline points="6.8,.4 9,2.5 6.8,4.4" fill="none" stroke="#b9b9b9" stroke-width="1.1"/></svg>
<svg style="left:414px;top:850px" width="15" height="15" viewBox="0 0 15 15"><circle cx="7.5" cy="7.5" r="6.8" fill="none" stroke="#6e6e6e" stroke-width="1.3"/><path d="M5.6,9.4 L10,5" stroke="#6e6e6e" stroke-width="1.7" stroke-linecap="round"/><g fill="#6e6e6e"><circle cx="7.5" cy="2.8" r=".45"/><circle cx="3.6" cy="4.4" r=".45"/><circle cx="11.4" cy="4.4" r=".45"/><circle cx="2.6" cy="8" r=".45"/><circle cx="12.4" cy="8" r=".45"/></g></svg>
<svg style="left:1396px;top:851px" width="13" height="13" viewBox="0 0 13 13"><rect x=".6" y=".6" width="11.8" height="11.8" rx="2" fill="none" stroke="#6e6e6e" stroke-width="1.1"/><rect x="2" y="8" width="9" height="2.4" rx=".6" fill="#6e6e6e"/></svg>
</div>
<div class="a" style="left:1407.9px;top:359px;width:5.8px;height:5.8px;border-radius:50%;background:#808080"></div>
<div class="a" style="left:1411px;top:360.9px;width:101px;height:2px;background:#808080"></div>
<div class="a" style="left:1522.50px;top:349.47px;font-size:26.5px;line-height:26.5px;color:#808080;-webkit-text-stroke:.6px #808080">Profile the Metal workload.</div>
<div class="a" style="left:418.1px;top:866px;width:5.6px;height:5.6px;border-radius:50%;background:#808080"></div>
<div class="a" style="left:420px;top:868px;width:2px;height:94.60000000000002px;background:#808080"></div>
<div class="a" style="left:182.00px;top:977.74px;font-size:26.3px;line-height:26.3px;color:#808080;-webkit-text-stroke:.6px #808080">Induce GPU Performance State in Metal</div>
<div class="a" style="left:182.00px;top:1009.74px;font-size:26.3px;line-height:26.3px;color:#808080;-webkit-text-stroke:.6px #808080">debugger.</div>
</body></html>
